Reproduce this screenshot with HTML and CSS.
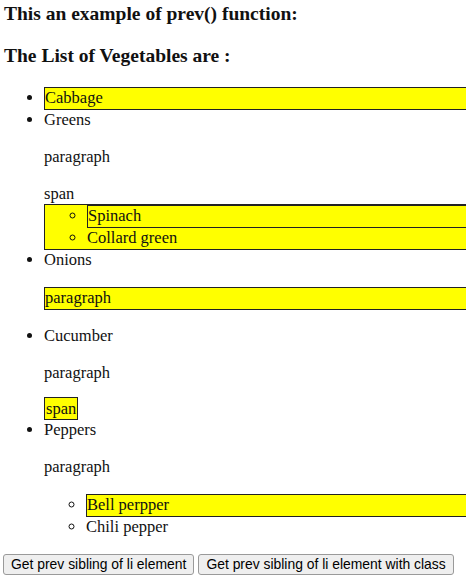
FILE: index.html
```html
<!DOCTYPE html>
<html>
<head>
<meta charset="utf-8">
<link rel="stylesheet" href="styles.css">
</head>
<body class="page">
<h3 class="title first">This an example of prev() function:</h3>
<h3 class="title">The List of Vegetables are :</h3>
<div class="clip">
<ul class="veg">
  <li class="hl">Cabbage</li>
  <li>Greens
    <p class="para">paragraph</p>
    <span>span</span>
    <ul class="sub hl">
      <li class="hl">Spinach</li>
      <li>Collard green</li>
    </ul>
  </li>
  <li>Onions
    <p class="para hl">paragraph</p>
  </li>
  <li>Cucumber
    <p class="para">paragraph</p>
    <span class="hl inl">span</span>
  </li>
  <li>Peppers
    <p class="para">paragraph</p>
    <ul class="sub">
      <li class="hl">Bell perpper</li>
      <li>Chili pepper</li>
    </ul>
  </li>
</ul>
</div>
<div class="actions">
<button class="btn">Get prev sibling of li element</button>
<button class="btn">Get prev sibling of li element with class</button>
</div>
</body>
</html>
```

FILE: styles.css
```css
html, body {
  background: #fff;
}
.page {
  margin: 0 0 0 3px;
  font-family: "Liberation Serif", "Times New Roman", serif;
  font-size: 16.5px;
  line-height: 20.85px;
  color: #111;
}
.title {
  font-size: 19.5px;
  line-height: 22px;
  font-weight: bold;
  margin: 20px 0 20px 1px;
}
.title.first {
  margin-top: 3px;
}
.clip {
  overflow: hidden;
  width: 463px;
  margin: 0 0 16px 0;
}
.veg {
  margin: 0 -20px 0 0;
  padding-left: 41px;
  list-style: disc;
}
.sub {
  margin: 0;
  padding-left: 42px;
  list-style: circle;
}
.para {
  margin: 16px 0;
}
.hl {
  background: #ffff00;
  border: 1px solid #222;
}
.inl {
  padding: 1px 1px;
}
.actions {
  margin: 0;
}
.btn {
  font-family: "Liberation Sans", Arial, sans-serif;
  font-size: 13.9px;
  line-height: 17px;
  color: #000;
  background: #efefef;
  border: 1px solid #9a9a9a;
  border-radius: 3px;
  padding: 1px 7px;
  margin: 0;
}
```
